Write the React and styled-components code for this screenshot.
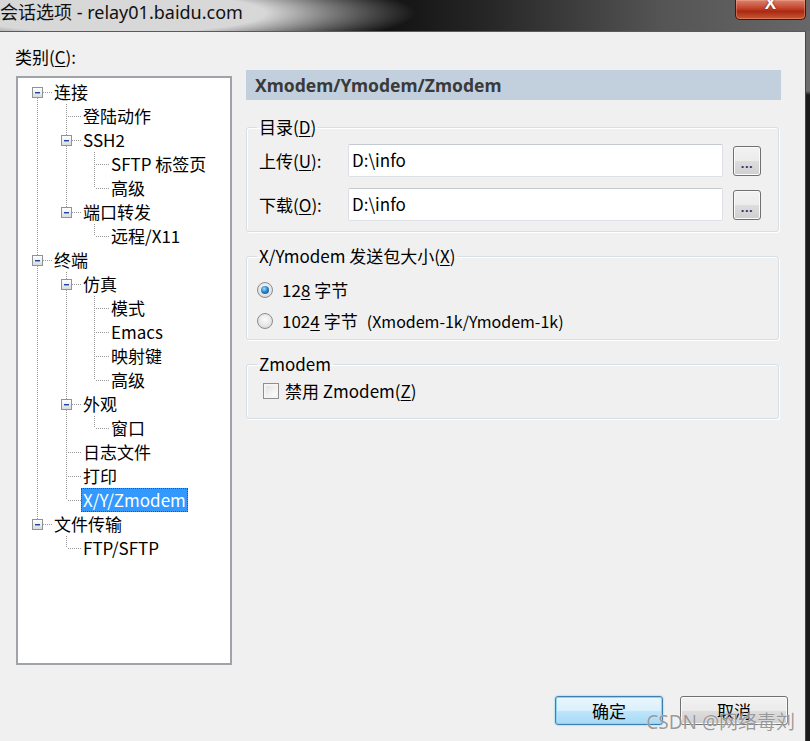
import styled, { createGlobalStyle } from 'styled-components';

const GlobalStyle = createGlobalStyle`
  html, body { margin: 0; padding: 0; background: #1c1c1c; }
  body { font-family: "Noto Sans CJK SC", "Noto Sans", sans-serif; color: #000; }
`;

// tree line x positions per level (relative to the tree content box)
const CX = [19, 48, 76];

const treeData = [
  {
    label: '连接',
    children: [
      { label: '登陆动作' },
      { label: 'SSH2', children: [{ label: 'SFTP 标签页' }, { label: '高级' }] },
      { label: '端口转发', children: [{ label: '远程/X11' }] },
    ],
  },
  {
    label: '终端',
    children: [
      {
        label: '仿真',
        children: [{ label: '模式' }, { label: 'Emacs' }, { label: '映射键' }, { label: '高级' }],
      },
      { label: '外观', children: [{ label: '窗口' }] },
      { label: '日志文件' },
      { label: '打印' },
      { label: 'X/Y/Zmodem', selected: true },
    ],
  },
  { label: '文件传输', children: [{ label: 'FTP/SFTP' }] },
];

const Window = styled.div`
  position: relative;
  width: 810px;
  height: 741px;
  display: flex;
  flex-direction: column;
  overflow: hidden;
`;

const TitleBar = styled.div`
  flex: none;
  height: 31px;
  display: flex;
  justify-content: space-between;
  align-items: flex-start;
  background:
    radial-gradient(ellipse 300px 40px at 115px 13px, rgba(222, 222, 222, 0.97) 50%, rgba(222, 222, 222, 0) 100%),
    linear-gradient(90deg, #151515 0%, #060606 40%, #262626 60%, #555 82%, #676767 100%);
`;

const TitleText = styled.div`
  font-family: "Noto Sans", "Noto Sans CJK SC", sans-serif;
  font-size: 18px;
  line-height: 24px;
  color: #111;
  white-space: nowrap;
`;

const CloseButton = styled.div`
  width: 71px;
  height: 20px;
  margin-right: 4px;
  box-sizing: border-box;
  border: 1px solid #3b1810;
  border-top: none;
  border-radius: 0 0 5px 5px;
  background: linear-gradient(#d98470 0%, #c8492f 40%, #a92a12 60%, #c95834 100%);
  box-shadow: inset 0 0 0 1px rgba(255, 190, 170, 0.35);
  display: flex;
  justify-content: center;
  overflow: hidden;

  span {
    font-family: "Liberation Sans", sans-serif;
    font-weight: bold;
    font-size: 17px;
    line-height: 14px;
    margin-top: -3px;
    color: #fff;
    text-shadow: 0 0 2px rgba(60, 0, 0, 0.8);
  }
`;

const Frame = styled.div`
  flex: 1;
  display: flex;
`;

const Edge = styled.div`
  width: 4px;
  background: linear-gradient(to bottom, #6d6d6d 0, #6d6d6d 60px, #1b1b1b 64px);
`;

const Body = styled.div`
  position: relative;
  flex: 1;
  display: flex;
  flex-direction: column;
  background: #f0f0f0;
  border-top: 1px solid #5a5a5a;
  border-right: 1px solid #454545;
`;

const Main = styled.div`
  display: flex;
  align-items: flex-start;
`;

const LeftCol = styled.div`
  width: 217px;
  margin-left: 15px;
  padding-top: 15px;
`;

const FieldLabel = styled.div`
  font-size: 17px;
  line-height: 20px;
  margin-bottom: ${({ $mb }) => $mb || 0}px;
  white-space: nowrap;
`;

const Key = styled.span`
  text-decoration: underline;
  text-underline-offset: 2px;
`;

const TreeBox = styled.div`
  margin-left: 1px;
  width: 216px;
  height: 589px;
  box-sizing: border-box;
  background: #fff;
  border: 2px solid #a0a4a8;
  padding-top: 2px;
`;

const Branch = styled.ul`
  list-style: none;
  margin: 0;
  padding: 0;
`;

const Item = styled.li`
  position: relative;

  &::before {
    content: '';
    position: absolute;
    left: ${({ $cx }) => $cx}px;
    top: ${({ $first }) => ($first ? 12 : 0)}px;
    width: 1px;
    ${({ $last, $first }) => ($last ? `height: ${$first ? 0 : 12}px;` : 'bottom: 0;')}
    background: repeating-linear-gradient(to bottom, #999 0 1px, transparent 1px 2px);
  }

  &::after {
    content: '';
    position: absolute;
    left: ${({ $cx }) => $cx + 1}px;
    top: 12px;
    width: 14px;
    height: 1px;
    background: repeating-linear-gradient(to right, transparent 0 1px, #999 1px 2px);
  }
`;

const Row = styled.div`
  height: 24px;
  display: flex;
  align-items: center;
`;

const Toggle = styled.span`
  position: absolute;
  z-index: 1;
  left: ${({ $cx }) => $cx - 5}px;
  top: 7px;
  width: 11px;
  height: 11px;
  box-sizing: border-box;
  border: 1px solid #8f9398;
  background: linear-gradient(#ffffff, #d9dbde);

  &::after {
    content: '';
    position: absolute;
    left: 2px;
    top: 4px;
    width: 5px;
    height: 1px;
    background: #1f48a6;
    box-shadow: 0 1px 0 rgba(31, 72, 166, 0.45);
  }
`;

const NodeLabel = styled.span`
  margin-left: ${({ $left }) => $left}px;
  height: 24px;
  box-sizing: border-box;
  padding: 0 1px;
  border: 1px dotted ${({ $selected }) => ($selected ? '#6b4a20' : 'transparent')};
  background: ${({ $selected }) => ($selected ? '#3399ff' : 'transparent')};
  color: ${({ $selected }) => ($selected ? '#fff' : '#000')};
  font-size: 17px;
  line-height: 22px;
  white-space: nowrap;
`;

const TreeNode = ({ node, depth, first, last }) => (
  <Item $cx={CX[depth]} $first={first && depth === 0} $last={last}>
    <Row>
      {node.children && <Toggle $cx={CX[depth]} />}
      <NodeLabel $left={CX[depth] + 15} $selected={node.selected}>
        {node.label}
      </NodeLabel>
    </Row>
    {node.children && (
      <Branch>
        {node.children.map((c, i) => (
          <TreeNode
            key={c.label + i}
            node={c}
            depth={depth + 1}
            first={i === 0}
            last={i === node.children.length - 1}
          />
        ))}
      </Branch>
    )}
  </Item>
);

const RightCol = styled.div`
  width: 535px;
  margin-left: 14px;
  margin-top: 38px;
`;

const Header = styled.div`
  height: 30px;
  background: #c2d0dd;
  padding-left: 9px;
  font-family: "Noto Sans", "Noto Sans CJK SC", sans-serif;
  font-weight: bold;
  font-size: 17.5px;
  line-height: 30px;
  color: #3a3a3a;
`;

const Group = styled.fieldset`
  margin: ${({ $mt }) => $mt}px 2px 0 0;
  padding: 0 17px ${({ $pb }) => $pb}px 12px;
  border: 1px solid #d5dfe5;
  border-radius: 3px;
  box-shadow: inset 1px 1px 0 #fff, 1px 1px 0 #fff;
  min-width: 0;
`;

const Legend = styled.legend`
  padding: 0 2px;
  margin-left: -2px;
  font-size: 17px;
  line-height: 20px;
  white-space: nowrap;
`;

const GroupBody = styled.div`
  padding-top: ${({ $pt }) => $pt}px;
`;

const DirRow = styled.div`
  display: flex;
  align-items: center;
  margin-top: ${({ $mt }) => $mt}px;
`;

const DirLabel = styled.div`
  width: 89px;
  font-size: 17px;
  line-height: 20px;
`;

const PathInput = styled.div`
  width: 375px;
  height: 33px;
  box-sizing: border-box;
  background: #fff;
  border: 1px solid #dde1e6;
  border-top-color: #c5cad1;
  border-radius: 2px;
  padding-left: 3px;
  font-size: 17px;
  line-height: 30px;
`;

const BrowseButton = styled.div`
  width: 28px;
  height: 30px;
  margin-left: 10px;
  box-sizing: border-box;
  border: 1px solid #707070;
  border-radius: 3px;
  background: linear-gradient(#f2f2f2 0%, #ebebeb 50%, #dddddd 51%, #cfcfcf 100%);
  box-shadow: inset 0 0 0 1px #fbfbfb;
  text-align: center;
  font-family: "Liberation Sans", sans-serif;
  font-weight: bold;
  font-size: 13px;
  line-height: 34px;
  letter-spacing: 0.5px;
  color: #2a3470;
`;

const OptionRow = styled.div`
  display: flex;
  align-items: center;
  height: ${({ $h }) => $h}px;
  margin-left: ${({ $ml }) => $ml}px;
  font-size: 17px;
  line-height: 20px;
  white-space: nowrap;
`;

const Radio = styled.span`
  position: relative;
  width: 16px;
  height: 16px;
  margin-right: 9px;
  box-sizing: border-box;
  border-radius: 50%;
  border: 1px solid #8a8c8f;
  background: radial-gradient(circle at 50% 40%, #fbfbfb 0%, #e4e4e4 60%, #c9c9c9 100%);

  &::after {
    content: '';
    display: ${({ $checked }) => ($checked ? 'block' : 'none')};
    position: absolute;
    left: 3px;
    top: 3px;
    width: 8px;
    height: 8px;
    border-radius: 50%;
    background: radial-gradient(circle at 40% 35%, #9fe0ff 0%, #2a86d0 45%, #0d3f78 100%);
  }
`;

const Check = styled.span`
  width: 16px;
  height: 16px;
  margin-right: 6px;
  box-sizing: border-box;
  border: 1px solid #8e8f8f;
  background: linear-gradient(135deg, #dcdcdc 0%, #f4f4f4 60%, #ffffff 100%);
  box-shadow: inset 0 0 0 2px #f4f4f4;
`;

const Unit = styled.span`
  margin-left: 4px;
`;

const Note = styled.span`
  margin-left: 9px;
  font-size: 16px;
`;

const Footer = styled.div`
  display: flex;
  justify-content: flex-end;
  gap: 17px;
  margin-top: 31px;
  padding-right: 17px;
`;

const Button = styled.div`
  width: 108px;
  height: 29px;
  box-sizing: border-box;
  border-radius: 3px;
  border: 1px solid ${({ $primary }) => ($primary ? '#3c7fb1' : '#707070')};
  background: ${({ $primary }) =>
    $primary
      ? 'linear-gradient(#eaf6fd 0%, #d9f0fc 50%, #bee6fd 51%, #a7d9f5 100%)'
      : 'linear-gradient(#f2f2f2 0%, #ebebeb 50%, #dddddd 51%, #cfcfcf 100%)'};
  box-shadow: ${({ $primary }) =>
    $primary ? 'inset 0 0 0 1px #8fd3f7, 0 0 2px #5ac8f7' : 'inset 0 0 0 1px #fbfbfb'};
  text-align: center;
  font-size: 17px;
  line-height: 27px;
`;

const Watermark = styled.div`
  position: absolute;
  right: 10px;
  bottom: 9px;
  font-family: "Noto Sans", "Noto Sans CJK SC", sans-serif;
  font-size: 19px;
  line-height: 20px;
  color: rgba(110, 110, 110, 0.7);
  text-shadow: 0 0 1px rgba(255, 255, 255, 0.9);
  white-space: nowrap;
`;

const App = () => (
  <>
    <GlobalStyle />
    <Window>
      <TitleBar>
        <TitleText>会话选项 - relay01.baidu.com</TitleText>
        <CloseButton>
          <span>X</span>
        </CloseButton>
      </TitleBar>
      <Frame>
        <Body>
          <Main>
            <LeftCol>
              <FieldLabel $mb={9}>
                类别(<Key>C</Key>):
              </FieldLabel>
              <TreeBox>
                <Branch>
                  {treeData.map((n, i) => (
                    <TreeNode
                      key={n.label}
                      node={n}
                      depth={0}
                      first={i === 0}
                      last={i === treeData.length - 1}
                    />
                  ))}
                </Branch>
              </TreeBox>
            </LeftCol>

            <RightCol>
              <Header>Xmodem/Ymodem/Zmodem</Header>

              <Group $mt={17} $pb={10}>
                <Legend>
                  目录(<Key>D</Key>)
                </Legend>
                <DirRow $mt={7}>
                  <DirLabel>
                    上传(<Key>U</Key>):
                  </DirLabel>
                  <PathInput>D:\info</PathInput>
                  <BrowseButton>...</BrowseButton>
                </DirRow>
                <DirRow $mt={11}>
                  <DirLabel>
                    下载(<Key>O</Key>):
                  </DirLabel>
                  <PathInput>D:\info</PathInput>
                  <BrowseButton>...</BrowseButton>
                </DirRow>
              </Group>

              <Group $mt={14} $pb={3}>
                <Legend>
                  X/Ymodem 发送包大小(<Key>X</Key>)
                </Legend>
                <GroupBody $pt={8}>
                  <OptionRow $h={31} $ml={-2}>
                    <Radio $checked />
                    12<Key>8</Key>
                    <Unit>字节</Unit>
                  </OptionRow>
                  <OptionRow $h={31} $ml={-2}>
                    <Radio />
                    102<Key>4</Key>
                    <Unit>字节</Unit>
                    <Note>(Xmodem-1k/Ymodem-1k)</Note>
                  </OptionRow>
                </GroupBody>
              </Group>

              <Group $mt={14} $pb={15}>
                <Legend>Zmodem</Legend>
                <GroupBody $pt={5}>
                  <OptionRow $h={24} $ml={4}>
                    <Check />
                    禁用 Zmodem(<Key>Z</Key>)
                  </OptionRow>
                </GroupBody>
              </Group>
            </RightCol>
          </Main>

          <Footer>
            <Button $primary>确定</Button>
            <Button>取消</Button>
          </Footer>

          <Watermark>CSDN @网络毒刘</Watermark>
        </Body>
        <Edge />
      </Frame>
    </Window>
  </>
);

export default App;
